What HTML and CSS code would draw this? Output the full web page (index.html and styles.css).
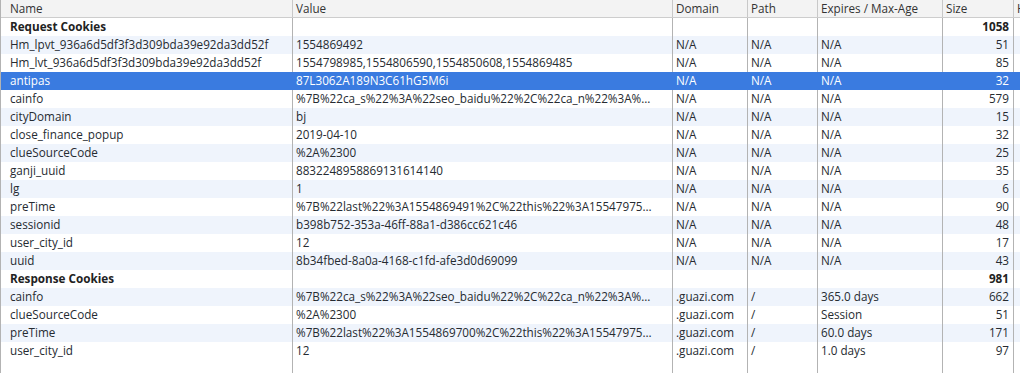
FILE: index.html
```html
<!DOCTYPE html>
<html>
<head>
<meta charset="utf-8">
<link rel="stylesheet" href="styles.css">
</head>
<body>
<div class="table">
  <div class="row head">
    <div class="c">Name</div><div class="c">Value</div><div class="c">Domain</div><div class="c">Path</div><div class="c">Expires / Max-Age</div><div class="c">Size</div><div class="c clip">H</div>
  </div>
  <div class="row group">
    <div class="c">Request Cookies</div><div class="c"></div><div class="c"></div><div class="c"></div><div class="c"></div><div class="c num">1058</div><div class="c"></div>
  </div>
  <div class="row alt">
    <div class="c">Hm_lpvt_936a6d5df3f3d309bda39e92da3dd52f</div><div class="c">1554869492</div><div class="c">N/A</div><div class="c">N/A</div><div class="c">N/A</div><div class="c num">51</div><div class="c"></div>
  </div>
  <div class="row">
    <div class="c">Hm_lvt_936a6d5df3f3d309bda39e92da3dd52f</div><div class="c">1554798985,1554806590,1554850608,1554869485</div><div class="c">N/A</div><div class="c">N/A</div><div class="c">N/A</div><div class="c num">85</div><div class="c"></div>
  </div>
  <div class="row selected">
    <div class="c">antipas</div><div class="c">87L3062A189N3C61hG5M6i</div><div class="c">N/A</div><div class="c">N/A</div><div class="c">N/A</div><div class="c num">32</div><div class="c"></div>
  </div>
  <div class="row">
    <div class="c">cainfo</div><div class="c">%7B%22ca_s%22%3A%22seo_baidu%22%2C%22ca_n%22%3A%…</div><div class="c">N/A</div><div class="c">N/A</div><div class="c">N/A</div><div class="c num">579</div><div class="c"></div>
  </div>
  <div class="row alt">
    <div class="c">cityDomain</div><div class="c">bj</div><div class="c">N/A</div><div class="c">N/A</div><div class="c">N/A</div><div class="c num">15</div><div class="c"></div>
  </div>
  <div class="row">
    <div class="c">close_finance_popup</div><div class="c">2019-04-10</div><div class="c">N/A</div><div class="c">N/A</div><div class="c">N/A</div><div class="c num">32</div><div class="c"></div>
  </div>
  <div class="row alt">
    <div class="c">clueSourceCode</div><div class="c">%2A%2300</div><div class="c">N/A</div><div class="c">N/A</div><div class="c">N/A</div><div class="c num">25</div><div class="c"></div>
  </div>
  <div class="row">
    <div class="c">ganji_uuid</div><div class="c">8832248958869131614140</div><div class="c">N/A</div><div class="c">N/A</div><div class="c">N/A</div><div class="c num">35</div><div class="c"></div>
  </div>
  <div class="row alt">
    <div class="c">lg</div><div class="c">1</div><div class="c">N/A</div><div class="c">N/A</div><div class="c">N/A</div><div class="c num">6</div><div class="c"></div>
  </div>
  <div class="row">
    <div class="c">preTime</div><div class="c">%7B%22last%22%3A1554869491%2C%22this%22%3A15547975…</div><div class="c">N/A</div><div class="c">N/A</div><div class="c">N/A</div><div class="c num">90</div><div class="c"></div>
  </div>
  <div class="row alt">
    <div class="c">sessionid</div><div class="c">b398b752-353a-46ff-88a1-d386cc621c46</div><div class="c">N/A</div><div class="c">N/A</div><div class="c">N/A</div><div class="c num">48</div><div class="c"></div>
  </div>
  <div class="row">
    <div class="c">user_city_id</div><div class="c">12</div><div class="c">N/A</div><div class="c">N/A</div><div class="c">N/A</div><div class="c num">17</div><div class="c"></div>
  </div>
  <div class="row alt">
    <div class="c">uuid</div><div class="c">8b34fbed-8a0a-4168-c1fd-afe3d0d69099</div><div class="c">N/A</div><div class="c">N/A</div><div class="c">N/A</div><div class="c num">43</div><div class="c"></div>
  </div>
  <div class="row group">
    <div class="c">Response Cookies</div><div class="c"></div><div class="c"></div><div class="c"></div><div class="c"></div><div class="c num">981</div><div class="c"></div>
  </div>
  <div class="row alt">
    <div class="c">cainfo</div><div class="c">%7B%22ca_s%22%3A%22seo_baidu%22%2C%22ca_n%22%3A%…</div><div class="c">.guazi.com</div><div class="c">/</div><div class="c">365.0 days</div><div class="c num">662</div><div class="c"></div>
  </div>
  <div class="row">
    <div class="c">clueSourceCode</div><div class="c">%2A%2300</div><div class="c">.guazi.com</div><div class="c">/</div><div class="c">Session</div><div class="c num">51</div><div class="c"></div>
  </div>
  <div class="row alt">
    <div class="c">preTime</div><div class="c">%7B%22last%22%3A1554869700%2C%22this%22%3A15547975…</div><div class="c">.guazi.com</div><div class="c">/</div><div class="c">60.0 days</div><div class="c num">171</div><div class="c"></div>
  </div>
  <div class="row">
    <div class="c">user_city_id</div><div class="c">12</div><div class="c">.guazi.com</div><div class="c">/</div><div class="c">1.0 days</div><div class="c num">97</div><div class="c"></div>
  </div>
  <div class="row filler">
    <div class="c"></div><div class="c"></div><div class="c"></div><div class="c"></div><div class="c"></div><div class="c"></div><div class="c"></div>
  </div>
</div>
</body>
</html>
```

FILE: styles.css
```css
html, body {
  margin: 0;
  padding: 0;
  background: #fff;
}

body {
  font-family: "Open Sans", "Liberation Sans", sans-serif;
  font-size: 11.7px;
  color: #262b31;
  overflow: hidden;
}

.table {
  height: 373px;
  display: flex;
  flex-direction: column;
  border-left: 1px solid #b3b3b3;
  box-sizing: border-box;
}

.row {
  display: grid;
  grid-template-columns: 291px 380px 75px 70px 125px 71px 1fr;
  height: 18px;
  line-height: 17px;
  flex: 0 0 auto;
}

.c {
  box-sizing: border-box;
  padding: 0 4px 0 3px;
  border-left: 1px solid #b3b3b3;
  white-space: nowrap;
  overflow: hidden;
  text-overflow: ellipsis;
}

.c:first-child {
  border-left: none;
  padding-left: 9px;
}

.clip {
  text-overflow: clip;
}

.num {
  text-align: right;
}

.head {
  height: 18px;
  line-height: 17px;
  background: #f3f3f3;
  border-bottom: 1px solid #cdcdcd;
  box-sizing: border-box;
  color: #333;
}

.head .c {
  border-left-color: #c8c8c8;
}

.group {
  font-weight: bold;
  color: #222;
}

.alt {
  background: #eff4fc;
}

.selected {
  background: #3a7be0;
  color: #fff;
}

.selected .c {
  border-left-color: #3a7be0;
}

.filler {
  flex: 1 1 auto;
  height: auto;
}
```
